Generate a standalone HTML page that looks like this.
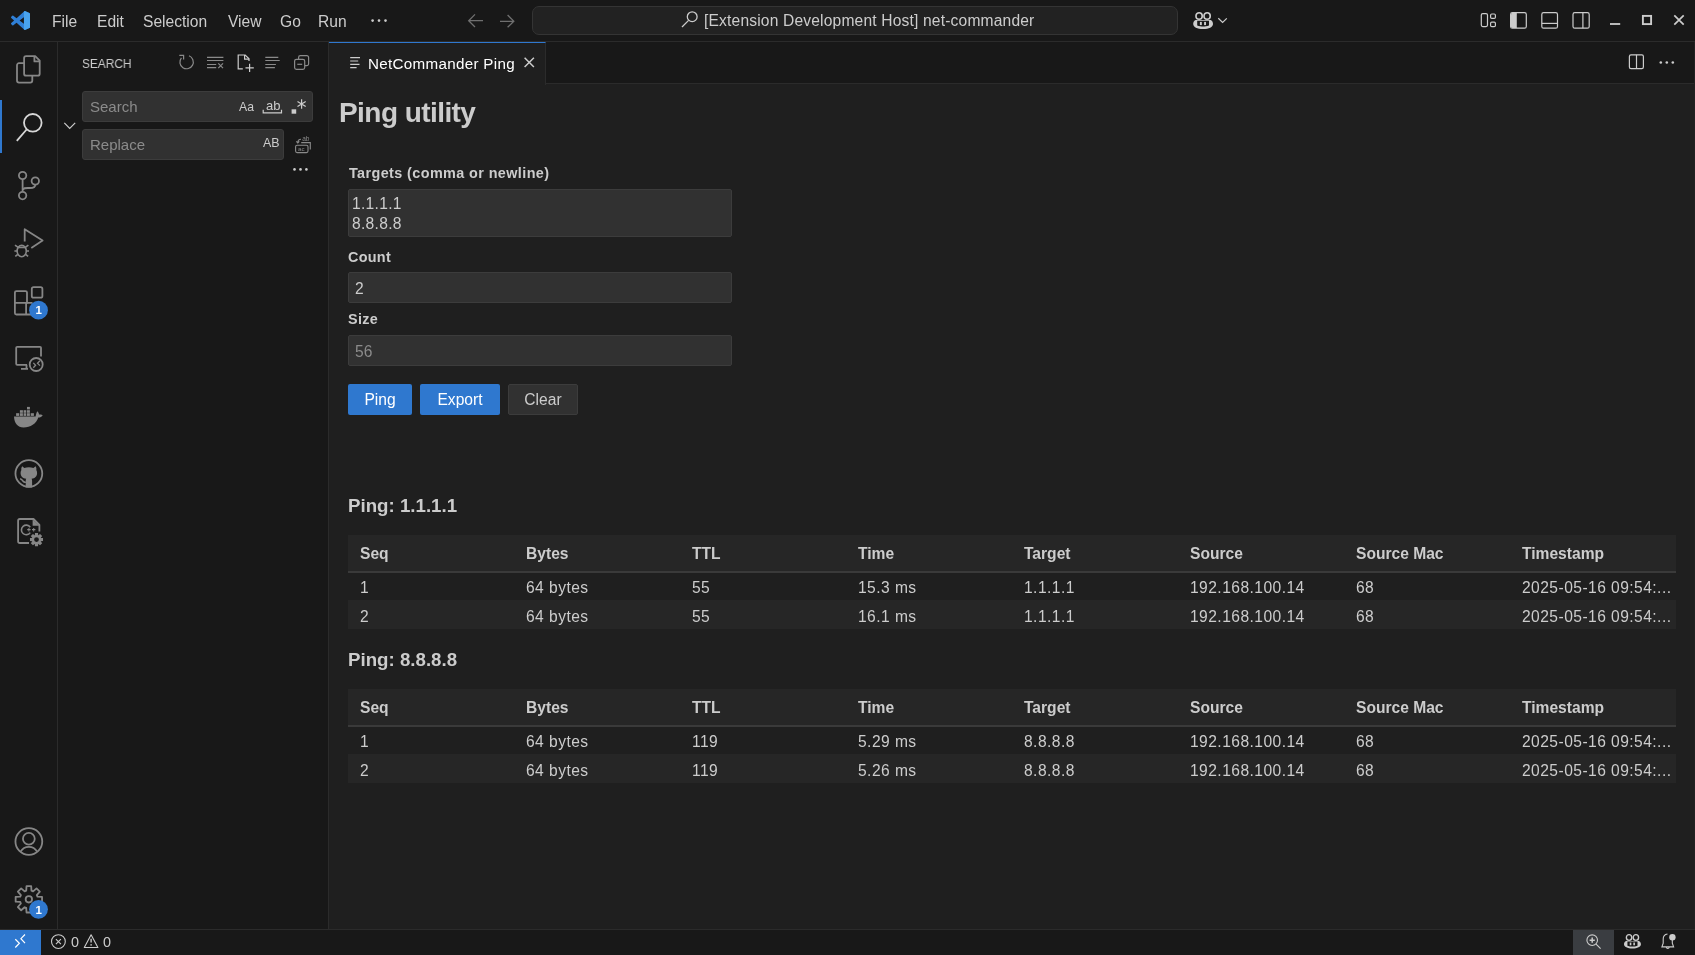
<!DOCTYPE html>
<html><head><meta charset="utf-8">
<style>
*{box-sizing:border-box;margin:0;padding:0}
html,body{width:1695px;height:955px;overflow:hidden;background:#1f1f1f;-webkit-font-smoothing:antialiased;font-family:"Liberation Sans",sans-serif;color:#cccccc}
.a{position:absolute;will-change:transform}
svg{position:absolute;overflow:visible}
.ic{fill:none;stroke:#cccccc;stroke-width:1.2}
/* title bar */
#title{left:0;top:0;width:1695px;height:42px;background:#181818;border-bottom:1px solid #2b2b2b}
.menu{top:13px;font-size:15.6px;color:#cccccc;white-space:nowrap}
#cmd{left:532px;top:6px;width:646px;height:29px;background:#222222;border:1px solid #343434;border-radius:7px}
#cmdtxt{left:704px;top:12px;font-size:15.6px;letter-spacing:0.17px;color:#cccccc;white-space:nowrap}
/* activity bar */
#act{left:0;top:42px;width:58px;height:887px;background:#181818;border-right:1px solid #2b2b2b}
.badge{width:19px;height:19px;border-radius:50%;background:#2f78cf;color:#fff;font-size:11px;font-weight:bold;text-align:center;line-height:19px}
/* sidebar */
#side{left:58px;top:42px;width:271px;height:887px;background:#181818;border-right:1px solid #2b2b2b}
.inp{background:#313131;border:1px solid #3c3c3c;border-radius:3px}
/* tabs */
#tabs{left:329px;top:42px;width:1366px;height:42px;background:#181818;border-bottom:1px solid #2b2b2b}
#tab{left:329px;top:42px;width:217px;height:43px;background:#1f1f1f;border-top:1px solid #2f78cf;border-right:1px solid #2b2b2b}
/* status */
#status{left:0;top:929px;width:1695px;height:26px;background:#181818;border-top:1px solid #2b2b2b}
#remote{left:0;top:930px;width:41px;height:25px;background:#2f78cf}
/* webview */
.lbl{font-weight:bold;font-size:14.4px;letter-spacing:0.3px;color:#cccccc;white-space:nowrap}
.field{left:348px;width:384px;background:#313131;border:1px solid #3c3c3c;border-radius:2px}
.ftxt{font-size:15.6px;color:#cccccc;white-space:nowrap}
.btn{top:384px;height:31px;border-radius:2px;font-size:15.6px;text-align:center;line-height:31px}
.tbl{left:348px;width:1328px}
.th{background:#262626;height:38px;border-bottom:2px solid #3a3a3a}
.r2{background:#262626}
.ttl{font-size:18.7px;margin-top:-4px;font-weight:bold;color:#cccccc;white-space:nowrap}
.cell{white-space:nowrap;font-size:15.6px;letter-spacing:0.45px;color:#cccccc}
.hcell{white-space:nowrap;font-size:15.6px;font-weight:bold;color:#cccccc}
</style></head><body>

<!-- title bar -->
<div id="title" class="a"></div>
<div class="a menu" style="left:52px">File</div>
<div class="a menu" style="left:97px">Edit</div>
<div class="a menu" style="left:143px">Selection</div>
<div class="a menu" style="left:228px">View</div>
<div class="a menu" style="left:280px">Go</div>
<div class="a menu" style="left:318px">Run</div>
<div id="cmd" class="a"></div>
<div id="cmdtxt" class="a">[Extension Development Host] net-commander</div>

<!-- activity bar -->
<div id="act" class="a"></div>
<div class="a" style="left:0;top:100px;width:2px;height:53px;background:#2f78cf"></div>

<!-- sidebar -->
<div id="side" class="a"></div>
<div class="a" style="left:82px;top:56px;font-size:13.2px;transform:scaleX(0.9);transform-origin:0 0;color:#cccccc">SEARCH</div>
<div class="a inp" style="left:82px;top:91px;width:231px;height:31px"></div>
<div class="a" style="left:90px;top:98px;font-size:15px;color:#8b8b8b">Search</div>
<div class="a inp" style="left:82px;top:129px;width:202px;height:31px"></div>
<div class="a" style="left:90px;top:136px;font-size:15px;color:#8b8b8b">Replace</div>

<!-- tabs -->
<div id="tabs" class="a"></div>
<div id="tab" class="a"></div>
<div class="a" style="left:367.5px;top:55px;font-size:15.2px;letter-spacing:0.3px;color:#ffffff;white-space:nowrap">NetCommander Ping</div>

<!-- webview -->
<div class="a" style="left:339px;top:96.7px;font-size:28px;letter-spacing:-0.56px;font-weight:bold;color:#cccccc;white-space:nowrap">Ping utility</div>
<div class="a lbl" style="left:348.5px;top:165px;letter-spacing:0.4px">Targets (comma or newline)</div>
<div class="a field" style="top:189px;height:48px"></div>
<div class="a ftxt" style="left:352px;top:193.5px;line-height:20.2px;letter-spacing:0.3px">1.1.1.1<br>8.8.8.8</div>
<div class="a lbl" style="left:348px;top:249px">Count</div>
<div class="a field" style="top:272px;height:31px"></div>
<div class="a ftxt" style="left:354.5px;top:280px">2</div>
<div class="a lbl" style="left:348px;top:311px">Size</div>
<div class="a field" style="top:335px;height:31px"></div>
<div class="a ftxt" style="left:354.5px;top:343px;color:#8b8b8b">56</div>
<div class="a btn" style="left:348px;width:64px;background:#2f78cf;color:#fff">Ping</div>
<div class="a btn" style="left:420px;width:80px;background:#2f78cf;color:#fff">Export</div>
<div class="a btn" style="left:508px;width:70px;background:#313131;border:1px solid #3c3c3c;color:#cccccc;line-height:29px">Clear</div>

<!-- tables -->
<div class="a ttl" style="left:348px;top:499px">Ping: 1.1.1.1</div>
<div class="a tbl th" style="top:535px"></div>
<div class="a tbl r2" style="top:600px;height:29px"></div>
<div class="a hcell" style="left:360px;top:545px">Seq</div>
<div class="a hcell" style="left:526px;top:545px">Bytes</div>
<div class="a hcell" style="left:692px;top:545px">TTL</div>
<div class="a hcell" style="left:858px;top:545px">Time</div>
<div class="a hcell" style="left:1024px;top:545px">Target</div>
<div class="a hcell" style="left:1190px;top:545px">Source</div>
<div class="a hcell" style="left:1356px;top:545px">Source Mac</div>
<div class="a hcell" style="left:1522px;top:545px">Timestamp</div>
<div class="a cell" style="left:360px;top:579px">1</div>
<div class="a cell" style="left:526px;top:579px">64 bytes</div>
<div class="a cell" style="left:692px;top:579px">55</div>
<div class="a cell" style="left:858px;top:579px">15.3 ms</div>
<div class="a cell" style="left:1024px;top:579px">1.1.1.1</div>
<div class="a cell" style="left:1190px;top:579px">192.168.100.14</div>
<div class="a cell" style="left:1356px;top:579px">68</div>
<div class="a cell" style="left:1522px;top:579px">2025-05-16 09:54:...</div>
<div class="a cell" style="left:360px;top:607.5px">2</div>
<div class="a cell" style="left:526px;top:607.5px">64 bytes</div>
<div class="a cell" style="left:692px;top:607.5px">55</div>
<div class="a cell" style="left:858px;top:607.5px">16.1 ms</div>
<div class="a cell" style="left:1024px;top:607.5px">1.1.1.1</div>
<div class="a cell" style="left:1190px;top:607.5px">192.168.100.14</div>
<div class="a cell" style="left:1356px;top:607.5px">68</div>
<div class="a cell" style="left:1522px;top:607.5px">2025-05-16 09:54:...</div>
<div class="a ttl" style="left:348px;top:653px">Ping: 8.8.8.8</div>
<div class="a tbl th" style="top:689px"></div>
<div class="a tbl r2" style="top:754px;height:29px"></div>
<div class="a hcell" style="left:360px;top:699px">Seq</div>
<div class="a hcell" style="left:526px;top:699px">Bytes</div>
<div class="a hcell" style="left:692px;top:699px">TTL</div>
<div class="a hcell" style="left:858px;top:699px">Time</div>
<div class="a hcell" style="left:1024px;top:699px">Target</div>
<div class="a hcell" style="left:1190px;top:699px">Source</div>
<div class="a hcell" style="left:1356px;top:699px">Source Mac</div>
<div class="a hcell" style="left:1522px;top:699px">Timestamp</div>
<div class="a cell" style="left:360px;top:733px">1</div>
<div class="a cell" style="left:526px;top:733px">64 bytes</div>
<div class="a cell" style="left:692px;top:733px">119</div>
<div class="a cell" style="left:858px;top:733px">5.29 ms</div>
<div class="a cell" style="left:1024px;top:733px">8.8.8.8</div>
<div class="a cell" style="left:1190px;top:733px">192.168.100.14</div>
<div class="a cell" style="left:1356px;top:733px">68</div>
<div class="a cell" style="left:1522px;top:733px">2025-05-16 09:54:...</div>
<div class="a cell" style="left:360px;top:761.5px">2</div>
<div class="a cell" style="left:526px;top:761.5px">64 bytes</div>
<div class="a cell" style="left:692px;top:761.5px">119</div>
<div class="a cell" style="left:858px;top:761.5px">5.26 ms</div>
<div class="a cell" style="left:1024px;top:761.5px">8.8.8.8</div>
<div class="a cell" style="left:1190px;top:761.5px">192.168.100.14</div>
<div class="a cell" style="left:1356px;top:761.5px">68</div>
<div class="a cell" style="left:1522px;top:761.5px">2025-05-16 09:54:...</div>

<div class="a" style="left:1694px;top:42px;width:1px;height:913px;background:#222222"></div>
<!-- status -->
<div id="status" class="a"></div>
<div id="remote" class="a"></div>

<div class="a" style="left:239px;top:99.5px;font-size:12.2px;color:#cccccc">Aa</div>
<div class="a" style="left:265.5px;top:98px;font-size:13px;color:#cccccc">ab</div>
<div class="a" style="left:262.5px;top:136px;font-size:12.4px;color:#cccccc">AB</div>
<div class="a" style="left:71px;top:933.6px;font-size:14.4px;color:#cccccc">0</div>
<div class="a" style="left:103.4px;top:933.6px;font-size:14.4px;color:#cccccc">0</div>
<svg class="a" style="left:0;top:0" width="1695" height="955" viewBox="0 0 1695 955">
<!-- VS Code logo -->
<g transform="translate(11,11) scale(0.19)">
<path fill="#2f7fd6" d="M96.46 10.8L75.86.87a6.23 6.23 0 0 0-7.1 1.2L29.33 38.04 12.15 25.01a4.16 4.16 0 0 0-5.32.24L1.33 30.25a4.17 4.17 0 0 0 0 6.16L16.24 50 1.33 63.59a4.17 4.17 0 0 0 0 6.16l5.5 5a4.16 4.16 0 0 0 5.32.24l17.18-13.03 39.43 35.97a6.22 6.22 0 0 0 7.1 1.2l20.6-9.92A6.25 6.25 0 0 0 100 83.6V16.4a6.25 6.25 0 0 0-3.54-5.6zM75.01 72.7L45.1 50l29.91-22.7v45.4z"/>
<path fill="#49a3ee" d="M75.86.87a6.23 6.23 0 0 0-7.1 1.2L68 2.8V97.2l.76.7a6.22 6.22 0 0 0 7.1 1.2l20.6-9.92A6.25 6.25 0 0 0 100 83.6V16.4a6.25 6.25 0 0 0-3.54-5.6zM75.01 72.7V27.3z"/>
</g>
<!-- back / forward -->
<g fill="none" stroke="#6f6f6f" stroke-width="1.3">
<path d="M483 20.7H469M475 14.4L468.7 20.7L475 27"/>
<path d="M500 21.3H513.5M507.6 15L513.8 21.3L507.6 27.3"/>
</g>
<!-- command center search -->
<g fill="none" stroke="#cccccc" stroke-width="1.3">
<circle cx="692.2" cy="16.7" r="4.9"/>
<path d="M688.6 20.4L682 27"/>
</g>
<!-- copilot title -->
<g transform="translate(1193.2,11.9)"><g fill="none" stroke="#cccccc" stroke-width="1.6"><ellipse cx="5.9" cy="4.1" rx="3.15" ry="3.3"/><ellipse cx="13.9" cy="4.1" rx="3.15" ry="3.3"/></g>
<path fill="#cccccc" fill-rule="evenodd" d="M2.3 8.1H17.5C19.3 9.1 19.8 10.6 19.8 12.1C19.8 15.1 15.8 17.1 9.9 17.1C4 17.1 0 15.1 0 12.1C0 10.6 0.5 9.1 2.3 8.1ZM4 8.9H15.8V13.6C13.8 14.4 11.8 14.6 9.9 14.6C8 14.6 6 14.4 4 13.6Z"/>
<rect x="6.7" y="10" width="1.9" height="3.2" fill="#cccccc"/><rect x="10.9" y="10" width="1.9" height="3.2" fill="#cccccc"/></g>
<path d="M1218.3 18.3L1222.6 22.5L1226.8 18.3" fill="none" stroke="#cccccc" stroke-width="1.2"/>
<!-- layout icons -->
<g fill="none" stroke="#cccccc" stroke-width="1.2">
<rect x="1481.3" y="13.6" width="6.2" height="13" rx="1.5"/>
<rect x="1490.6" y="14" width="4.8" height="4.4" rx="1.2"/>
<rect x="1490.6" y="22.1" width="4.8" height="4.6" rx="1.2"/>
<rect x="1510.6" y="12.6" width="15.7" height="15.6" rx="1.8"/>
<rect x="1541.8" y="12.6" width="15.7" height="15.6" rx="1.8"/>
<path d="M1541.8 23.4H1557.5"/>
<rect x="1573" y="12.6" width="16.2" height="15.6" rx="1.8"/>
<path d="M1582.9 12.6V28.2"/>
</g>
<path d="M1511 14.5A1.8 1.8 0 0 1 1512.5 12.8H1516.8V28H1512.5A1.8 1.8 0 0 1 1511 26.3Z" fill="#cccccc"/>
<!-- window controls -->
<g fill="none" stroke="#cccccc">
<path d="M1610 24H1620.2" stroke-width="1.8"/>
<rect x="1642.9" y="15.9" width="8.2" height="8.2" stroke-width="1.9"/>
<path d="M1674.3 15.4L1683.7 24.6M1683.7 15.4L1674.3 24.6" stroke-width="1.7"/>
</g>
</svg>
<svg class="a" style="left:0;top:0" width="1695" height="955" viewBox="0 0 1695 955">
<g fill="none" stroke="#868686" stroke-width="1.8" stroke-linejoin="round">
<!-- explorer -->
<path d="M24.1 63.2H19A2 2 0 0 0 17 65.2V80.6A2 2 0 0 0 19 82.6H30.3A2 2 0 0 0 32.3 80.6V75.7"/>
<path d="M26.1 56.1H35.2L39.7 60.6V73.7A2 2 0 0 1 37.7 75.7H26.1A2 2 0 0 1 24.1 73.7V58.1A2 2 0 0 1 26.1 56.1Z"/>
<path d="M34.4 56.3V61.4H39.5"/>
<!-- scm -->
<circle cx="22.6" cy="175.5" r="3.7"/>
<circle cx="22.6" cy="195.6" r="3.7"/>
<circle cx="35.3" cy="181" r="3.7"/>
<path d="M22.6 179.2V191.9"/>
<path d="M22.8 190C23.5 187.6 25.5 188 30 188C33.5 188 35.3 186.5 35.3 184.7"/>
<!-- run & debug -->
<path d="M24.7 241.4V229.2L42.6 240.6L31.3 248.1"/>
<ellipse cx="21.7" cy="251" rx="4.6" ry="5.8" stroke-width="1.6"/>
<path d="M17.1 247.4H26.3M15 245.1L17.8 247.2M28.4 245.1L25.6 247.2M14.4 251H17.1M26.3 251H29M15.3 256.4L17.8 254.3M28.1 256.4L25.6 254.3" stroke-width="1.6"/>
<!-- extensions -->
<path d="M27 303.4V292.6A1.5 1.5 0 0 0 25.5 291.1H16.4A1.5 1.5 0 0 0 14.9 292.6V313A1.5 1.5 0 0 0 16.4 314.5H32.5"/>
<path d="M14.9 302.8H32.5M26.1 302.8V314.5"/>
<rect x="31.8" y="287.1" width="10.6" height="10.6" rx="1.8"/>
<!-- remote explorer -->
<path d="M41 356.4V347.8A1 1 0 0 0 40 346.8H17.2A1 1 0 0 0 16.2 347.8V363.8A1 1 0 0 0 17.2 364.8H27"/>
<path d="M26.5 364.8V368.7M21 368.9H28"/>
<circle cx="36.2" cy="364.5" r="6.5"/>
<path d="M33.3 362.9L35.6 365.2L33.3 367.7M39.9 360.8L37.5 363.3L39.9 365.6" stroke-width="1.3" stroke-linejoin="miter"/>
<!-- github circle -->
<circle cx="28.85" cy="473.5" r="13.4"/>
<!-- account -->
<circle cx="28.85" cy="841.5" r="13.4"/>
<circle cx="28.85" cy="838.8" r="5.9"/>
<path d="M20.6 851.6A9.6 9.6 0 0 1 37.1 851.6"/>
<!-- settings gear -->
<path id="gear" d="M26.22 890.69L26.52 886.10L31.18 886.10L31.48 890.69L33.08 891.35L36.54 888.32L39.83 891.61L36.80 895.07L37.46 896.67L42.05 896.97L42.05 901.63L37.46 901.93L36.80 903.53L39.83 906.99L36.54 910.28L33.08 907.25L31.48 907.91L31.18 912.50L26.52 912.50L26.22 907.91L24.62 907.25L21.16 910.28L17.87 906.99L20.90 903.53L20.24 901.93L15.65 901.63L15.65 896.97L20.24 896.67L20.90 895.07L17.87 891.61L21.16 888.32L24.62 891.35Z"/>
<circle cx="28.85" cy="899.3" r="3.2"/>
<!-- c++ doc -->
<path d="M29 543H19.9A1.8 1.8 0 0 1 18.1 541.2V520.8A1.8 1.8 0 0 1 19.9 519H33.5L39.4 525V531.5"/>
<path d="M30.2 527.2A4.8 4.8 0 1 0 30.2 532.6" stroke-width="1.6"/>
</g>
<!-- filled docker, github cat, c++ gear -->
<g fill="#868686">
<path d="M14 416.5H35.6C36 414.5 36.5 412.5 37.3 411.3C38.4 412.2 38.9 413.3 39 414.6C40.5 414.1 42 414.6 42.7 415.3C41.8 416.9 40.3 417.6 38.3 417.6C36.2 424 30.6 427.4 23.5 427.4C17.8 427.4 14.3 423.6 14 416.5Z"/>
<rect x="16.1" y="413.2" width="3.1" height="2.7"/><rect x="19.9" y="413.2" width="3" height="2.7"/><rect x="23.6" y="413.2" width="2.7" height="2.7"/><rect x="27" y="413.2" width="2.9" height="2.7"/><rect x="30.7" y="413.2" width="3.2" height="2.7"/>
<rect x="19.9" y="410.2" width="3" height="2.6"/><rect x="23.6" y="410.2" width="2.7" height="2.6"/><rect x="27" y="410.2" width="2.9" height="2.6"/>
<rect x="27" y="406.9" width="2.9" height="2.5"/>
<!-- cat -->
<path d="M22.2 466.2L24.3 467.9C25.7 467.4 27.2 467.2 28.9 467.2C30.5 467.2 32 467.4 33.4 467.9L35.6 466.2C36.4 467.5 36.6 468.8 36.3 470C36.9 471 37.1 472 37.1 473C37.1 476.5 34.9 478.4 31.6 478.8C32 479.4 32.1 480 32.1 481V487.6H25.7V481C25.7 480 25.8 479.4 26.2 478.8C22.8 478.4 20.6 476.5 20.6 473C20.6 472 20.8 471 21.4 470C21.1 468.8 21.3 467.5 22.2 466.2Z"/>
<path d="M20.3 478.1C21.6 478.5 22.6 479.5 23.5 480.6C24.2 481.4 25 481.7 25.9 481.7V483.1C24.5 483.2 23.2 482.6 22.3 481.4C21.6 480.5 21 479.8 19.9 479.4Z"/>
<!-- c++ plus -->
<path d="M27.2 529.1H28.4V527.9H29.4V529.1H30.6V530.3H29.4V531.5H28.4V530.3H27.2Z"/>
<path d="M32 529.1H33.2V527.9H34.2V529.1H35.4V530.3H34.2V531.5H33.2V530.3H32Z"/>
<path d="M32.6 519.3L39.3 525.8H32.6Z"/>
<path fill-rule="evenodd" d="M34.82 535.21L34.99 533.07L38.01 533.07L38.18 535.21L38.41 535.31L40.05 533.92L42.18 536.05L40.79 537.69L40.89 537.92L43.03 538.09L43.03 541.11L40.89 541.28L40.79 541.51L42.18 543.15L40.05 545.28L38.41 543.89L38.18 543.99L38.01 546.13L34.99 546.13L34.82 543.99L34.59 543.89L32.95 545.28L30.82 543.15L32.21 541.51L32.11 541.28L29.97 541.11L29.97 538.09L32.11 537.92L32.21 537.69L30.82 536.05L32.95 533.92L34.59 535.31ZM36.5 537.2A2.4 2.4 0 1 0 36.5 542A2.4 2.4 0 1 0 36.5 537.2Z"/>
</g>
<!-- search (active) -->
<g fill="none" stroke="#d7d7d7" stroke-width="1.8">
<circle cx="32.8" cy="122.8" r="8.8"/>
<path d="M26.6 129.5L16.8 140.8"/>
</g>
<!-- active indicator -->
<rect x="0" y="100" width="2" height="53" fill="#2f78cf"/>
<!-- badges -->
<circle cx="38.5" cy="310.2" r="9.4" fill="#2f78cf"/>
<circle cx="38.5" cy="909.3" r="9.4" fill="#2f78cf"/>
<g fill="#ffffff" font-family="Liberation Sans, sans-serif" font-weight="bold" font-size="11.5" text-anchor="middle">
<text x="38.8" y="314.4">1</text>
<text x="38.8" y="913.5">1</text>
</g>
</svg>
<svg class="a" style="left:0;top:0" width="1695" height="955" viewBox="0 0 1695 955">
<!-- sidebar actions (disabled gray) -->
<g fill="none" stroke="#8a8a8a" stroke-width="1.2">
<path d="M189 55.8A6.7 6.7 0 1 1 181.4 57.8"/>
<path d="M179.3 55.3H183.6V59.6"/>
<path d="M207 57.3H223.4M207 60.5H223.4M207 64.5H216.2M207 67.6H216.2"/>
<path d="M218.3 63.4L223 68.2M223 63.4L218.3 68.2"/>
<path d="M265.3 57.3H278.3M265.3 60.5H279.7M265.3 64.5H275.9M265.3 67.6H274.9"/>
<path d="M298.6 59.2V57.4A1.8 1.8 0 0 1 300.4 55.6H306.8A1.8 1.8 0 0 1 308.6 57.4V63.8A1.8 1.8 0 0 1 306.8 65.6H305"/>
<rect x="294.6" y="59.3" width="10.1" height="10" rx="1.8"/>
<path d="M297.3 64.3H302.2"/>
</g>
<!-- new search editor (enabled) -->
<g fill="none" stroke="#cccccc" stroke-width="1.2">
<path d="M242.8 68.8H238.2V55H245.2L249 58.8V61"/>
<path d="M244.6 55V59.2H249"/>
<path d="M245.5 67.9H253.8M249.6 63.7V72"/>
</g>
<!-- chevron -->
<path d="M64.3 122.8L69.7 128.4L75.2 122.8" fill="none" stroke="#cccccc" stroke-width="1.2"/>
<!-- regex .* -->
<rect x="291.6" y="109.3" width="4.6" height="4.4" fill="#cccccc"/>
<g stroke="#cccccc" stroke-width="1.2" fill="none">
<path d="M301.6 99.2V108.8M297.5 101.6L305.7 106.4M305.7 101.6L297.5 106.4"/>
<path d="M263.2 109.8V112.9H281.5V109.8"/>
</g>
<!-- replace all -->
<g fill="none" stroke="#8a8a8a" stroke-width="1.1">
<rect x="295.6" y="145.2" width="12.4" height="7.4" rx="1.5"/>
<path d="M301.2 142.6H310.3V149.6"/>
<path d="M301 139.2C299 139.2 297.8 140.5 297.8 142.6M296.3 141.3L297.8 143L299.3 141.3"/>
</g>
<g fill="#8a8a8a" font-family="Liberation Sans, sans-serif" font-size="6.5">
<text x="302.2" y="141.2">ab</text>
<text x="298" y="151.2" font-size="6.2">ac</text>
</g>
<!-- more dots sidebar -->
<g fill="#cccccc"><circle cx="294.5" cy="169.4" r="1.3"/><circle cx="300.5" cy="169.4" r="1.3"/><circle cx="306.4" cy="169.4" r="1.3"/></g>
<!-- tab icon -->
<g stroke="#cccccc" stroke-width="1.2" fill="none">
<path d="M350.2 57.6H360M350.2 61H358.2M350.2 64.4H359.5M350.2 67.7H356.6"/>
<path d="M524.6 57.7L533.9 67M533.9 57.7L524.6 67" stroke-width="1.5"/>
</g>
<!-- split editor + more -->
<g fill="none" stroke="#cccccc" stroke-width="1.2">
<rect x="1629.4" y="54.8" width="14" height="13.8" rx="1.6"/>
<path d="M1636.5 54.8V68.6"/>
</g>
<g fill="#cccccc"><circle cx="1660.8" cy="62.5" r="1.3"/><circle cx="1666.8" cy="62.5" r="1.3"/><circle cx="1672.8" cy="62.5" r="1.3"/></g>
<!-- menu more dots -->
<g fill="#cccccc"><circle cx="372.6" cy="20.6" r="1.3"/><circle cx="379" cy="20.6" r="1.3"/><circle cx="385.5" cy="20.6" r="1.3"/></g>
<!-- status bar -->
<g fill="none" stroke="#ffffff" stroke-width="1.2">
<path d="M15.3 939.2L19.4 943.2L15.3 947.5M25 934.5L20.9 938.7L25 943.2"/>
</g>
<g fill="none" stroke="#cccccc" stroke-width="1.1">
<circle cx="58.4" cy="941.6" r="6.9"/>
<path d="M55.9 939.1L60.9 944.1M60.9 939.1L55.9 944.1"/>
<path d="M91.1 934.8L84.3 947.5H97.9Z" stroke-linejoin="round"/>
<path d="M91.1 938.8V942.6" stroke-width="1.4"/><circle cx="91.1" cy="944.9" r="0.8" fill="#cccccc" stroke="none"/>
</g>
<rect x="1573" y="930" width="41" height="25" fill="#3a3d41"/>
<g fill="none" stroke="#cccccc" stroke-width="1.1">
<circle cx="1592.2" cy="940.2" r="5.3"/>
<path d="M1592.2 937.6V942.8M1589.6 940.2H1594.8" stroke-width="1.5"/>
<path d="M1596.1 944.2L1600.6 948.6"/>
</g>
<g transform="translate(1624,934) scale(0.855)"><g fill="none" stroke="#cccccc" stroke-width="1.6"><ellipse cx="5.9" cy="4.1" rx="3.15" ry="3.3"/><ellipse cx="13.9" cy="4.1" rx="3.15" ry="3.3"/></g>
<path fill="#cccccc" fill-rule="evenodd" d="M2.3 8.1H17.5C19.3 9.1 19.8 10.6 19.8 12.1C19.8 15.1 15.8 17.1 9.9 17.1C4 17.1 0 15.1 0 12.1C0 10.6 0.5 9.1 2.3 8.1ZM4 8.9H15.8V13.6C13.8 14.4 11.8 14.6 9.9 14.6C8 14.6 6 14.4 4 13.6Z"/>
<rect x="6.7" y="10" width="1.9" height="3.2" fill="#cccccc"/><rect x="10.9" y="10" width="1.9" height="3.2" fill="#cccccc"/></g>
<g fill="none" stroke="#cccccc" stroke-width="1.1">
<path d="M1667.5 934A5 5 0 0 0 1663.2 939V943.2L1661.9 946.9H1673.6L1672.3 943.2V940"/>
<path d="M1666.2 947.2A1.6 1.6 0 0 0 1669.3 947.2"/>
</g>
<circle cx="1672.4" cy="937.2" r="3.2" fill="#cccccc"/>
</svg>

</body></html>
